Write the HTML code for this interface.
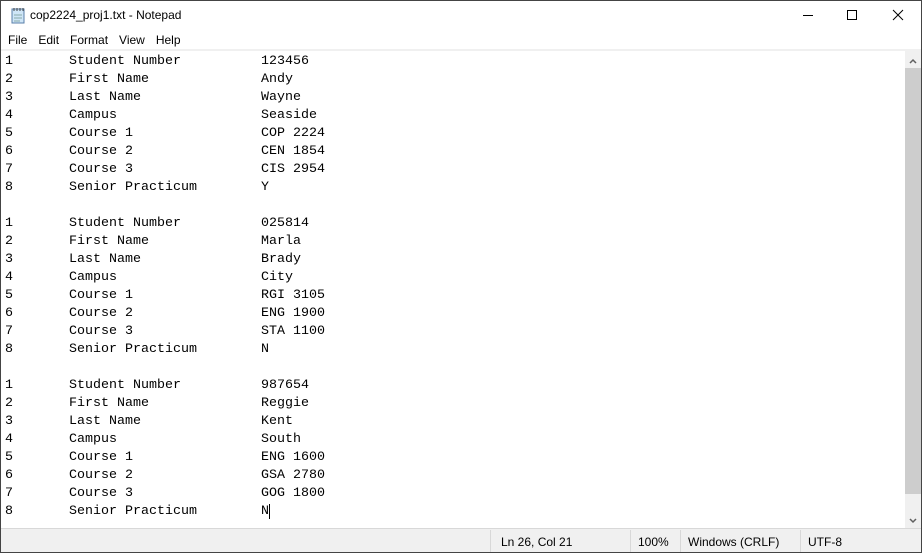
<!DOCTYPE html>
<html><head><style>
body{margin:0;width:922px;height:553px;overflow:hidden;background:#fff;font-family:"Liberation Sans",sans-serif;position:relative}
.win{position:absolute;left:0;top:0;width:922px;height:553px;border:1px solid #444;box-sizing:border-box;z-index:5;pointer-events:none}
.title{position:absolute;left:0;top:0;width:921px;height:31px}
.title span{position:absolute;left:30px;top:8px;font-size:12px;color:#000}
.menu{position:absolute;top:33px;left:8px;font-size:12px}
.menu span{margin-right:11px}
.sep{position:absolute;left:0;top:49px;width:921px;height:2px;background:#f0f0f0}
pre{position:absolute;left:5px;top:53px;margin:0;font-family:"Liberation Mono",monospace;font-size:13.33px;line-height:18px;tab-size:8;color:#000}
.cur{border-left:1px solid #000}
.sb{position:absolute;left:905px;top:51px;width:16px;height:478px;background:#f0f0f0}
.thumb{position:absolute;left:905px;top:68px;width:16px;height:426px;background:#cdcdcd}
.status{position:absolute;left:0;top:528px;width:921px;height:24px;background:#f0f0f0;border-top:1px solid #d8d8d8;font-size:12px}
.status span{position:absolute;top:6px}
.status i{position:absolute;top:1px;width:1px;height:22px;background:#d8d8d8}
</style></head><body>
<div class="win"></div>
<div class="title">
<svg style="position:absolute;left:10px;top:7px" width="16" height="17"><rect x="2" y="2" width="12" height="14" fill="#cfe6f7" stroke="#5a7fa8"/><path d="M4 1v3M7 1v3M10 1v3M13 1v3" stroke="#444"/><path d="M4 8h8M4 11h8M4 14h6" stroke="#8aa"/></svg>
<span>cop2224_proj1.txt - Notepad</span>
<svg style="position:absolute;left:800px;top:8px" width="110" height="16"><path d="M3 7.5h10" stroke="#000"/><rect x="47.5" y="2.5" width="9" height="9" fill="none" stroke="#000"/><path d="M93 2l10 10M103 2l-10 10" stroke="#000"/></svg>
</div>
<div class="menu"><span>File</span><span>Edit</span><span>Format</span><span>View</span><span>Help</span></div>
<div class="sep"></div>
<pre>1	Student Number		123456
2	First Name		Andy
3	Last Name		Wayne
4	Campus			Seaside
5	Course 1		COP 2224
6	Course 2		CEN 1854
7	Course 3		CIS 2954
8	Senior Practicum	Y

1	Student Number		025814
2	First Name		Marla
3	Last Name		Brady
4	Campus			City
5	Course 1		RGI 3105
6	Course 2		ENG 1900
7	Course 3		STA 1100
8	Senior Practicum	N

1	Student Number		987654
2	First Name		Reggie
3	Last Name		Kent
4	Campus			South
5	Course 1		ENG 1600
6	Course 2		GSA 2780
7	Course 3		GOG 1800
8	Senior Practicum	N<span class="cur"> </span></pre>
<div class="sb"></div><div class="thumb"></div>
<svg style="position:absolute;left:905px;top:53px" width="16" height="476"><path d="M5 10l3-3 3 3" stroke="#606060" stroke-width="1.5" fill="none"/><path d="M5 466l3 3 3-3" stroke="#606060" stroke-width="1.5" fill="none"/></svg>
<div class="status">
<i style="left:490px"></i><i style="left:630px"></i><i style="left:680px"></i><i style="left:800px"></i>
<span style="left:501px">Ln 26, Col 21</span><span style="left:638px">100%</span><span style="left:688px">Windows (CRLF)</span><span style="left:808px">UTF-8</span>
</div>
</body></html>
